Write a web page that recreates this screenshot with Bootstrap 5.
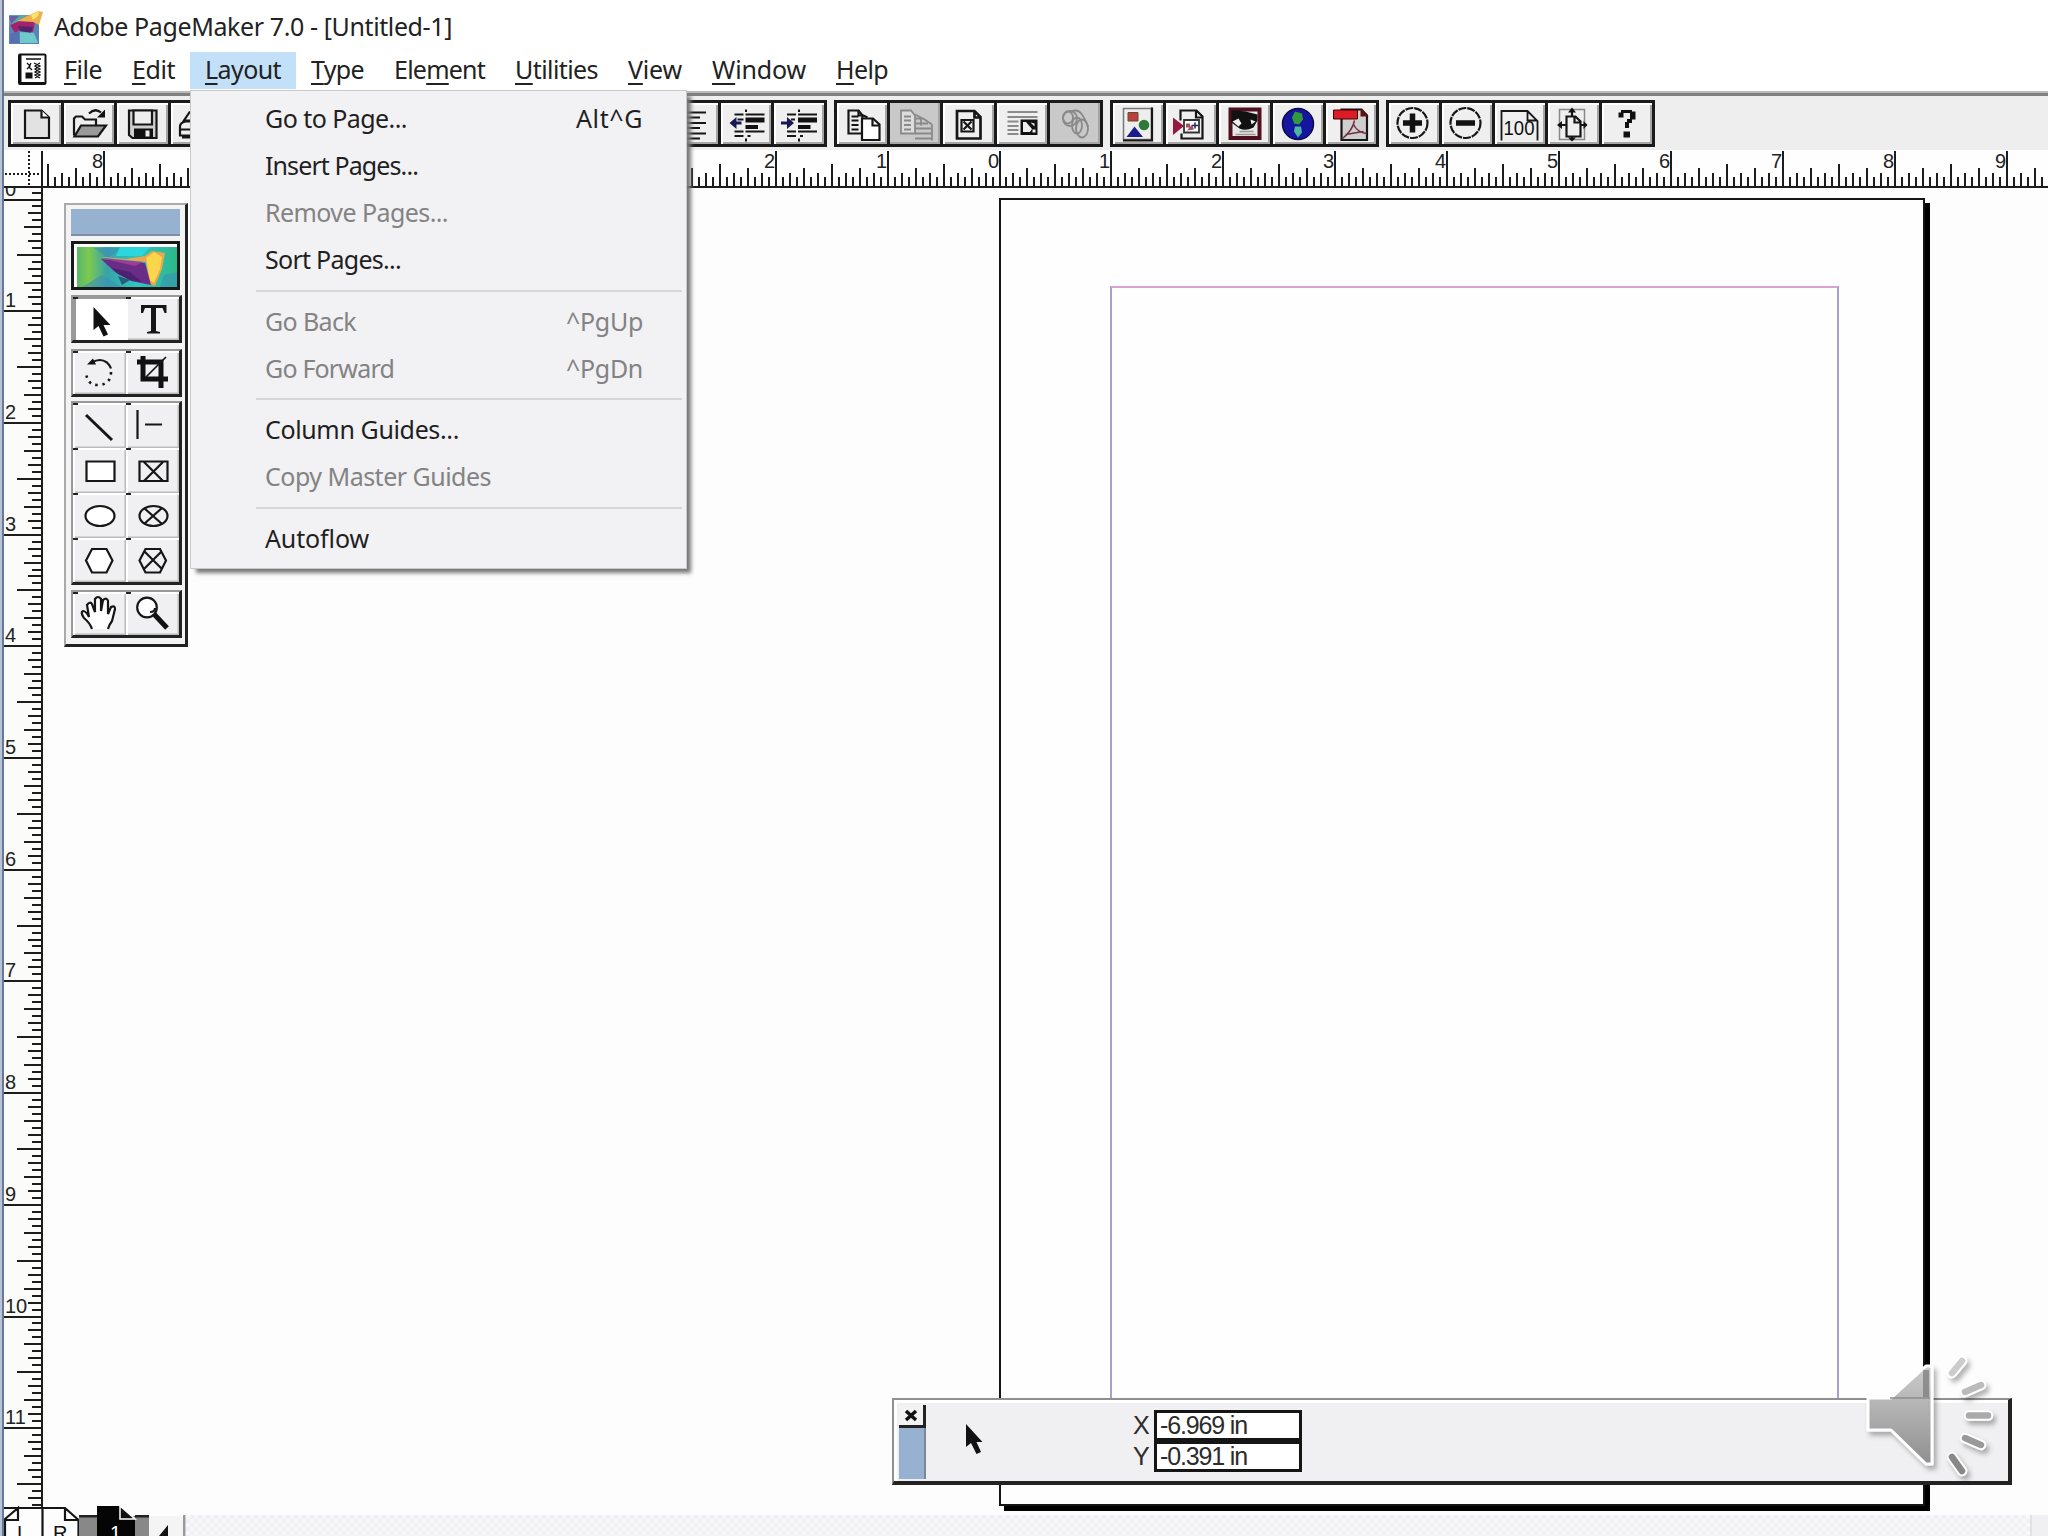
<!DOCTYPE html>
<html lang="en">
<head>
<meta charset="utf-8">
<title>Adobe PageMaker 7.0 - [Untitled-1]</title>
<link href="https://cdn.jsdelivr.net/npm/bootstrap@5.3.0/dist/css/bootstrap.min.css" rel="stylesheet">
<style>
  html, body { width: 2048px; height: 1536px; overflow: hidden; }
  body { font-family: "Noto Sans", "Open Sans", sans-serif; font-size: 25px; color: #222; background: #fdfdfd; line-height: 1; }
  svg { display: block; }
  .app-frame { width: 2048px; height: 1536px; border-left: 2px solid #b9c3d3; }
  .app-inner { border-left: 2px solid #66789c; min-width: 0; }
  .caption-bar { height: 50px; padding-left: 4px; gap: 11px; padding-top: 3px; background: #fff; }
  .menu-strip { height: 41px; padding-left: 13px; background: #fff; }
  .menu-strip .nav-link { height: 37px; padding: 0 15px; color: #222; line-height: 35px; margin-top: 2px; border-radius: 0; position: relative; left: 1px; }
  .menu-strip .nav-link.show { background: #c2e1f8; }
  .menu-strip u { text-underline-offset: 4px; text-decoration-thickness: 2px; text-decoration-skip-ink: none; }
  .tool-strip { height: 59px; background: #efeeef; border-top: 2px solid #bbb; padding: 7px 0 0 4px; position: relative; gap: 7px; }
  .tool-strip::before { content: ""; position: absolute; left: 0; right: 0; top: 0; height: 3px; background: #808080; }
  .left-tools { width: 819px; }
  .tgroup { border: 3px solid #1a1a1a; height: 47px; }
  .tgroup .btn { padding: 0; border: 0; border-radius: 0; width: 50.2px; height: 41px; background: #f0eff0; box-shadow: inset 2px 2px #fff, inset -2px -2px #a5a5a5; overflow: hidden; }
  .tgroup .btn + .btn { border-left: 3px solid #1a1a1a; width: 53.2px; }
  .tgroup .btn.dim { background: #c9c9c9; box-shadow: inset -2px -2px #a5a5a5; }
  .text-tools svg { margin-left: 2px; }
  .h-ruler { height: 38px; background: #fefefe; }
  .v-ruler { width: 39px; background: #fbfcf9; }
  .ruler-num { font-family: "Liberation Sans", sans-serif; font-size: 20px; fill: #222; }
  .workarea { background: #fdfdfd; overflow: hidden; }
  .sheet { left: 956px; top: 10px; width: 926px; height: 1308px; border: 2px solid #151515; background: #fefefe; box-shadow: 5px 5px #000; }
  .guides { left: 109px; top: 86px; width: 729px; height: 1180px; border: 2px solid #a9a0d0; border-top-color: #d8a3cf; }
  .pull-menu { left: 190px; top: 90px; width: 497px; height: 479px; background: #f2f1f3; border: 1.5px solid #c9c9c9; border-radius: 0; box-shadow: 5px 5px 4px -1px #777; padding: 4px 4px 0 65px; z-index: 20; font-size: 25px; }
  .pull-menu .dropdown-item { height: 47px; padding: 0 39px 0 9px; line-height: 46px; color: #1f1f1f; }
  .pull-menu .dropdown-item.disabled { color: #838383; }
  .pull-menu .dropdown-divider { margin: 6.5px 0 6px; border-top: 2px solid #d6d5d7; opacity: 1; }
  .toolbox { left: 64px; top: 203px; width: 124px; height: 444px; background: #f4f3f4; border: 2px solid #aaa; border-right: 3px solid #222; border-bottom: 3px solid #222; padding: 4px 5px 0 5px; z-index: 10; }
  .toolbox .grip { height: 27px; background: #97b2d0; border-bottom: 2px solid #7f8fa5; }
  .toolbox .emblem { width: 109px; height: 49px; margin-top: 5px; border: 3px solid #181818; background: #fff; padding: 3px 0 0 3px; }
  .tset { width: 111px; border: 2px solid #999; border-right: 3px solid #222; border-bottom: 3px solid #222; background: #f0eff1; }
  .tset > div > div { width: 53px; box-shadow: inset 2px 2px #fff, inset -1.5px -1.5px #bbb; overflow: hidden; position: relative; }
  .tset > div > div::before { content: ""; position: absolute; left: 0; top: 0; width: 5px; height: 2px; background: #222; }
  .tset .picked { background: #fff; box-shadow: inset 3px 2px #999; }
  .ctrl-pal { left: 892px; top: 1398px; width: 1120px; height: 87px; background: #f0eff1; border: 2px solid #8f8f8f; border-right: 4px solid #222; border-bottom: 4px solid #222; box-shadow: inset 3px 3px #fff; padding: 5px; z-index: 10; }
  .pal-grip { width: 27px; height: 74px; background: #97b2d0; border-right: 2px solid #7c8896; }
  .pal-x { width: 27px; height: 23px; background: #f2f2f2; border-right: 3px solid #222; border-bottom: 3px solid #222; }
  .coord { font-family: "Liberation Sans", sans-serif; font-size: 25px; color: #2c2c2c; }
  .coord .val { width: 148px; height: 31px; border: 3px solid #151515; background: #fff; padding-left: 3px; line-height: 24px; margin-bottom: -1px; }
  .coord .key { width: 21px; line-height: 31px; }
  .speaker { left: 1855px; top: 1344px; z-index: 30; }
  .page-strip { left: 4px; top: 1506px; height: 30px; z-index: 8; right: 0; }
  .scroll-track { margin-top: 9px; background: repeating-conic-gradient(#f1f0f2 0 25%, #f8f7f9 0 50%) 0 0 / 8px 8px; }
  .scroll-end { margin-top: 9px; width: 18px; background: #f0eff1; border-left: 2px solid #e2e1e3; }
  .ln { fill: none; stroke: #161616; stroke-width: 2.2; }
  .pd { fill: none; stroke: #8a8a8a; stroke-width: 1.8; }
  .fit { white-space: nowrap; display: inline-block; }
</style>
<script src="https://cdn.jsdelivr.net/npm/bootstrap@5.3.0/dist/js/bootstrap.bundle.min.js"></script>
</head>
<body>
<div class="app-frame d-flex position-relative">
 <div class="app-inner d-flex flex-column flex-grow-1">
  <header class="caption-bar d-flex align-items-center">
    <svg width="35" height="34" viewBox="8 8 35 34"><rect x="9" y="13" width="30" height="29" fill="#5b83b5"/><path d="M9 13h24l-9 6-15 6z" fill="#5aa6a0"/><path d="M9 14h10l-8 8z" fill="#6b5da8"/><path d="M10 23l14-6 11 3-2 10-12-3-6 4z" fill="#a3226f"/><path d="M18 24l15 1-2 6-11-2z" fill="#54246b"/><path d="M17 19l21-10 5 1-4 13-6-3z" fill="#eeb04c"/><path d="M31 13l8-4-1 5-5 4z" fill="#fbe26a"/><path d="M20 30l14 1 4 10H19z" fill="#6fc9cb"/><path d="M10 32l9-3 1 12H10z" fill="#5670b0"/></svg>
    <span class="fit" data-w="398">Adobe PageMaker 7.0 - [Untitled-1]</span>
  </header>
  <nav class="menu-strip d-flex">
    <svg width="31" height="33" viewBox="17 53 31 33" style="margin-top:3px"><rect x="18" y="53.500" width="28.500" height="31.500" rx="2" fill="#111"/><path d="M21.500 55.500h23v26.500h-23z" fill="#fff"/><path d="M26 59h15M27 63l3 3-3 3M31 63l-2 4 3 3M34 63l6 3-5 3 5 3-5 3 5 3M40 63l-5 3 5 3-5 3 5 3-5 3" stroke="#111" stroke-width="1.300" fill="none"/><path d="M25.500 72.500h7v6h-7z" fill="#111"/></svg>
    <a class="nav-link"><span class="fit" data-w="38"><u>F</u>ile</span></a>
    <a class="nav-link"><span class="fit" data-w="43"><u>E</u>dit</span></a>
    <a class="nav-link show"><span class="fit" data-w="76"><u>L</u>ayout</span></a>
    <a class="nav-link"><span class="fit" data-w="53"><u>T</u>ype</span></a>
    <a class="nav-link"><span class="fit" data-w="91">Ele<u>m</u>ent</span></a>
    <a class="nav-link"><span class="fit" data-w="83"><u>U</u>tilities</span></a>
    <a class="nav-link"><span class="fit" data-w="54"><u>V</u>iew</span></a>
    <a class="nav-link"><span class="fit" data-w="94"><u>W</u>indow</span></a>
    <a class="nav-link"><span class="fit" data-w="52"><u>H</u>elp</span></a>
  </nav>
  <div class="tool-strip d-flex">
    <div class="left-tools d-flex justify-content-between flex-shrink-0">
      <div class="tgroup d-flex">
        <button class="btn"><svg width="51" height="41" viewBox="10.500 102.500 51 41"><path class="ln" style="fill:#e2e2e2" d="M24.500 110H41l7.500 7v20.500h-24z"/><path class="ln" style="fill:#fff" d="M41 110v7h7.500"/></svg></button>
        <button class="btn"><svg width="51" height="41" viewBox="64 102.500 51 41"><path class="ln" d="M74 135v-17l2-2h6l3 3h11v6M89 113q6-6 12-1"/><path class="ln" style="fill:#999" d="M81 125h25l-8 11H74.500z"/><path d="M97 117h8v-8z" fill="#111"/></svg></button>
        <button class="btn"><svg width="51" height="41" viewBox="117.500 102.500 51 41"><path class="ln" d="M129.500 110h27.500v27.500h-24l-3.500-3z" style="fill:#cfcfcf"/><path class="ln" d="M134 110h18.500v14H134z" style="fill:#eee"/><path d="M134.500 128h19v10h-19z" fill="#111"/><path d="M146 130h4v6h-4z" fill="#eee"/></svg></button>
        <button class="btn"><svg width="51" height="41" viewBox="171 102.500 51 41"><path class="ln" d="M190 111l-6 9h20M180 135v-9q0-4 6-5h20v14zM180 129h28M182 137h20"/></svg></button>
        <button class="btn"></button>
      </div>
      <div class="tgroup text-tools d-flex">
        <button class="btn"></button><button class="btn"></button><button class="btn"></button><button class="btn"></button><button class="btn"></button><button class="btn"></button><button class="btn"></button>
        <button class="btn"><svg width="51" height="41" viewBox="669 102.500 51 41"><path class="ln" d="M681 112h25M681 117h19M681 122.500h25M681 127.500h19M681 133h25M681 138h19"/></svg></button>
        <button class="btn"><svg width="51" height="41" viewBox="722.500 102.500 51 41"><path class="ln" d="M734 114h9M737 119h6M734 131h9M734 135.500h9M745 114h19M745 131h19M747 135.500h3"/><path d="M745 117h19v5h-19zM745 124.500h12.500v4H745zM744.500 109h2v2.500h-2zM744.500 138h2v3h-2z" fill="#111"/><path d="M729 122.500l7-6v4.500h5v3h-5v4.500z" fill="#181850"/></svg></button>
        <button class="btn"><svg width="51" height="41" viewBox="776 102.500 51 41"><path class="ln" d="M787 114h9M791 119h4M787 131h9M787 135.500h9M798 114h19M798 131h19M800 135.500h3"/><path d="M798 117h19v5h-19zM798 124.500h12.500v4H798zM798 109h2v2.500h-2zM798 138h2v3h-2z" fill="#111"/><path d="M794 122.500l-7-6v4.500h-6v3h6v4.500z" fill="#181850"/></svg></button>
      </div>
    </div>
    <div class="tgroup d-flex flex-shrink-0">
      <button class="btn"><svg width="51" height="41" viewBox="836.500 102.500 51 41"><path class="ln" d="M848 110h10l4 5v18h-14zM851 116h7M851 120h7M851 124.500h7M851 129h7"/><path class="ln" style="fill:#fff" d="M861.500 118h11l6.500 6v15.500h-17.500z"/><path class="ln" d="M872 118v7h7M858 110v5h5l4 2"/></svg></button>
      <button class="btn dim"><svg width="51" height="41" viewBox="890 102.500 51 41"><path class="pd" style="fill:#ddd" d="M901 110h10l4 5v18h-14z"/><path class="pd" d="M904 116h7M904 120h7M904 124.500h7M904 129h7M915 118h8l9 6M915 123h13M915 128h17M915 133h17M915 138h17M932 124v16M915 114l6 3v8"/></svg></button>
      <button class="btn"><svg width="51" height="41" viewBox="943.500 102.500 51 41"><path class="ln" style="stroke-width:2.700" d="M957.500 110.500H975l6 6v21.500h-23.500zM975 110v7h6"/><path class="ln" d="M962 119.500h12v11.500h-12zM964 121l8 8M972 121l-8 8"/></svg></button>
      <button class="btn"><svg width="51" height="41" viewBox="996.500 102.500 51 41"><path class="pd" d="M1007 111.500h30M1007 116.500h30M1007 121h11M1007 125.500h11M1007 129.500h11M1007 133.500h11"/><path d="M1020 119h17v15.500h-17z" fill="#111"/><path d="M1022.500 121.500h3l6 7-2 3h-7zM1030 122l4 1v3zM1032 129h3v3h-3z" fill="#eee"/></svg></button>
      <button class="btn dim"><svg width="51" height="41" viewBox="1050 102.500 51 41"><g class="pd"><ellipse cx="1068" cy="117" rx="5" ry="6"/><ellipse cx="1070" cy="118" rx="7" ry="7.500"/><ellipse cx="1077" cy="125" rx="5" ry="8"/><ellipse cx="1082" cy="128" rx="6" ry="9"/><path d="M1071 111q7-3 11 3t6 12"/></g></svg></button>
    </div>
    <div class="tgroup d-flex flex-shrink-0">
      <button class="btn"><svg width="51" height="41" viewBox="1112.500 102.500 51 41"><path fill="#eee" stroke="#777" stroke-width="1.500" d="M1123 108h28v31h-28z"/><path class="ln" d="M1151.500 107v33h-29"/><path fill="#c23d42" stroke="#552" d="M1127.500 112h10v8.500h-10z"/><circle cx="1143.500" cy="124.500" r="5.300" fill="#2f7a3a"/><path fill="#1c1c8e" d="M1126 136.500l8-10.500 8.500 10.500z"/></svg></button>
      <button class="btn"><svg width="51" height="41" viewBox="1166 102.500 51 41"><path class="ln" style="fill:#eee" d="M1180.500 120v-10h16l6 6v22h-21v-5M1196 110v7h7"/><path fill="#fff" stroke="#333" stroke-width="1.800" d="M1184 119.500h15v12.500h-15z"/><path d="M1173 117l11 8.500-11 9z" fill="#94193f"/><path d="M1186 123h4v4h-4zM1187 130l5-6 2 5z" fill="#a2505e"/><path d="M1192 125h6M1195 122v6" stroke="#226" stroke-width="1.500"/></svg></button>
      <button class="btn"><svg width="51" height="41" viewBox="1219.500 102.500 51 41"><path fill="#e9e7e8" stroke="#501020" stroke-width="4" d="M1231 109h29v28.500h-29z"/><path fill="#111" d="M1232 114q6-5 14-3l12 3v6l-4 7q-8 4-14 1l-8-6zM1232 110h9l-9 6z"/><path fill="#eee" d="M1233 121l6-3 3 5-3 3zM1251 119l5 2-4 3z"/><path d="M1240 131h14M1236 134h20" stroke="#999" stroke-width="1.600"/></svg></button>
      <button class="btn"><svg width="51" height="41" viewBox="1273 102.500 51 41"><circle cx="1298" cy="123.500" r="15.500" fill="#1515a0" stroke="#0b0b45" stroke-width="1.500"/><path fill="#319a3c" d="M1295 111l7 2 1 6-4 5-5-1-2-6z"/><path fill="#4cb6a0" d="M1295 126h6l1 6-4 5-4-6z"/></svg></button>
      <button class="btn"><svg width="51" height="41" viewBox="1326.500 102.500 51 41"><path class="ln" style="fill:#cfcfcf" d="M1342 109h20l5.500 6v24.500H1342z"/><path d="M1361 108v8h8z" fill="#611"/><path fill="#dc1b24" stroke="#400" d="M1334 109.500h24v9h-24z"/><path fill="none" stroke="#703040" stroke-width="1.500" d="M1343 138q10-8 12-18M1354 124q4 8 13 9M1346 134l18-3"/></svg></button>
    </div>
    <div class="tgroup d-flex flex-shrink-0">
      <button class="btn"><svg width="51" height="41" viewBox="1388 102.500 51 41"><circle class="ln" cx="1411.500" cy="122.500" r="15" stroke-dasharray="8 1"/><path d="M1411.500 113v19M1402 122.500h19" stroke="#111" stroke-width="5.500"/></svg></button>
      <button class="btn"><svg width="51" height="41" viewBox="1441.500 102.500 51 41"><circle class="ln" cx="1465" cy="122.500" r="15" stroke-dasharray="8 1"/><path d="M1455.500 122.500h19" stroke="#111" stroke-width="5.500"/></svg></button>
      <button class="btn"><svg width="51" height="41" viewBox="1494.500 102.500 51 41"><path class="ln" style="stroke-width:1.800" d="M1501 140v-29.500h26l10 10V140M1527 110v10h10"/><text x="1503" y="134" font-family="Liberation Sans" font-size="20" textLength="31" lengthAdjust="spacingAndGlyphs" fill="#111">100</text></svg></button>
      <button class="btn"><svg width="51" height="41" viewBox="1547.500 102.500 51 41"><path fill="none" stroke="#888" stroke-width="1.500" d="M1559 109h25v30h-25z"/><path class="ln" d="M1566 116h9l5 5v15h-14zM1574 116v6h6M1571.500 110v6M1571.500 136v4M1559 124.500h7M1580 124.500h6"/><path d="M1567.500 112l4-5 4 5zM1567.500 137l4 4 4-4zM1561.500 120.500v8l-5-4zM1583 120.500v8l4-4z" fill="#111"/></svg></button>
      <button class="btn"><svg width="51" height="41" viewBox="1601 102.500 51 41"><path d="M1617.500 112h5v5h-5zM1620 109.500h11v3h-11zM1629 111h5.500v8H1629zM1626 118.500h5v4h-5zM1624 121.500h4v6h-4z" fill="#111"/><path d="M1622.500 131h6.500v6h-6.500z" fill="#111"/></svg></button>
    </div>
  </div>
  <div class="h-ruler"><svg id="hr" width="2044" height="38" viewBox="4 150 2044 38" shape-rendering="crispEdges"></svg></div>
  <div class="d-flex flex-grow-1" style="min-height:0">
    <div class="v-ruler flex-shrink-0"><svg id="vr" width="39" height="1348" viewBox="4 188 39 1348" shape-rendering="crispEdges"></svg></div>
    <main class="workarea flex-grow-1 position-relative">
      <div class="sheet position-absolute"><div class="guides position-absolute"></div></div>
    </main>
  </div>
 </div>

 <div class="pull-menu dropdown-menu show position-absolute" style="margin-left:-2px">
   <a class="dropdown-item d-flex justify-content-between"><span class="fit" data-w="142">Go to Page...</span><span class="fit" data-w="67">Alt^G</span></a>
   <a class="dropdown-item"><span class="fit" data-w="153">Insert Pages...</span></a>
   <a class="dropdown-item disabled"><span class="fit" data-w="183">Remove Pages...</span></a>
   <a class="dropdown-item"><span class="fit" data-w="136">Sort Pages...</span></a>
   <div class="dropdown-divider"></div>
   <a class="dropdown-item disabled d-flex justify-content-between"><span class="fit" data-w="91">Go Back</span><span class="fit" data-w="77">^PgUp</span></a>
   <a class="dropdown-item disabled d-flex justify-content-between"><span class="fit" data-w="129">Go Forward</span><span class="fit" data-w="77">^PgDn</span></a>
   <div class="dropdown-divider"></div>
   <a class="dropdown-item"><span class="fit" data-w="194">Column Guides...</span></a>
   <a class="dropdown-item disabled"><span class="fit" data-w="226">Copy Master Guides</span></a>
   <div class="dropdown-divider"></div>
   <a class="dropdown-item"><span class="fit" data-w="104">Autoflow</span></a>
 </div>

 <aside class="toolbox position-absolute" style="margin-left:-2px">
   <div class="grip"></div>
   <div class="emblem"><svg width="100" height="40" viewBox="77 247 100 40"><defs><linearGradient id="sea"><stop offset="0" stop-color="#58b76a"/><stop offset=".12" stop-color="#7cc94f"/><stop offset=".3" stop-color="#38a3a6"/><stop offset=".6" stop-color="#2cc5c6"/><stop offset="1" stop-color="#2eb887"/></linearGradient></defs><path fill="url(#sea)" d="M77 247h100v40H77z"/><path fill="#3a8fb8" opacity=".6" d="M94 248h28l-14 10zM82 287l20-12 20 12zM160 287l4-12 13-3v15z"/><path fill="#2bd6dc" d="M120 247h30l-8 9h-26z"/><path fill="#2a5d78" d="M118 276l12 4-8 5z"/><path fill="#e9a84a" d="M102 257l24 2 19-3 7-5 13 2-3 16-7 17-5-2-4-22-40-4z"/><path fill="#fbd64c" d="M146 258l8-6 8 5-2 12-6 14-4-3z"/><path fill="#6b2c88" d="M101 259l20 2 24 2 6 22-20-4-16-9z"/><path fill="#4a2270" d="M112 268l18 4 12 10-12-2-12-6z"/><path fill="#9a3f95" d="M101 258l42 4-8 4z"/></svg></div>
   <div class="tset" style="margin-top:5px;height:48px"><div class="d-flex h-100">
     <div class="picked"><svg width="53" height="43" viewBox="73 297 53 43"><path d="M93.500 307v23l5-4 5 10.500 4.500-2-4.500-9.500h7z" fill="#111"/></svg></div>
     <div><svg width="53" height="43" viewBox="126 297 53 43"><path fill="#161616" d="M141 305h25.500v8h-2l-2-5H156v23l4 1v1.500h-13V332l4-1v-23h-6l-2 5h-2z"/></svg></div></div></div>
   <div class="tset" style="margin-top:6px;height:48px"><div class="d-flex h-100">
     <div><svg width="53" height="43" viewBox="73 351 53 43"><path d="M92 362.500q8-5 15 0 3 3 4 6" class="ln"/><path d="M111 372q0 12-12 13t-13-13" class="ln" stroke-dasharray="2.500 4.500" style="stroke-width:2.600"/><path d="M87 364.500l6-6 3 6z" fill="#111"/></svg></div>
     <div><svg width="53" height="43" viewBox="126 351 53 43"><path d="M143 356v23h25M137 362h24v26" stroke="#111" stroke-width="5" fill="none"/><path d="M146 377l20-20" class="ln" style="stroke-width:1.700"/></svg></div></div></div>
   <div class="tset" style="margin-top:4px;height:184px">
     <div class="d-flex" style="height:45px"><div><svg width="53" height="45" viewBox="73 402 53 45"><path class="ln" style="stroke-width:3" d="M86 414l26 25"/></svg></div><div><svg width="53" height="45" viewBox="126 402 53 45"><path class="ln" d="M137.500 409v29M145 423.500h17"/></svg></div></div>
     <div class="d-flex" style="height:45px"><div><svg width="53" height="45" viewBox="73 448 53 45"><path class="ln" style="fill:#fff" d="M86.500 461.500h28V481h-28z"/></svg></div><div><svg width="53" height="45" viewBox="126 448 53 45"><path class="ln" d="M139.500 461.500h28V481h-28zM144 462l19 19M163 462l-19 19"/></svg></div></div>
     <div class="d-flex" style="height:45px"><div><svg width="53" height="45" viewBox="73 493 53 45"><ellipse class="ln" cx="100" cy="516" rx="14.500" ry="10" style="fill:#fff"/></svg></div><div><svg width="53" height="45" viewBox="126 493 53 45"><ellipse class="ln" cx="153.500" cy="516" rx="14" ry="10"/><path class="ln" d="M144 508l18 16M162 508l-18 16"/></svg></div></div>
     <div class="d-flex" style="height:44px"><div><svg width="53" height="44" viewBox="73 538 53 44"><path class="ln" style="fill:#fff" d="M92 549h14.500l6 11.500-6 12H92l-6-12z"/></svg></div><div><svg width="53" height="44" viewBox="126 538 53 44"><path class="ln" d="M145.500 549H160l6 11.500-6 12h-14.500l-6-12zM144 551l18 18M162 551l-18 18"/></svg></div></div>
   </div>
   <div class="tset" style="margin-top:5px;height:48px"><div class="d-flex h-100">
     <div><svg width="53" height="43" viewBox="73 592 53 43"><path class="ln" style="fill:#fff" d="M92 629q-2-6-8-11-4-6-1-7 3 0 6 6l-2-12q3-4 5-1l3 8v-13q3-4 6 0v12l2-11q4-3 5 1v13l3-7q4-2 4 2l-3 12q-3 4-4 8"/></svg></div>
     <div><svg width="53" height="43" viewBox="126 592 53 43"><circle class="ln" cx="147" cy="607.500" r="9.800" style="fill:#fff"/><path class="ln" d="M150 612q5 0 5-4"/><path d="M154 614l13 14" stroke="#111" stroke-width="5"/></svg></div></div></div>
 </aside>

 <section class="ctrl-pal position-absolute d-flex" style="margin-left:-2px">
   <div class="pal-grip flex-shrink-0"><div class="pal-x"><svg width="24" height="20" viewBox="0 0 24 20"><path d="M7 6l10 9M17 6L7 15" stroke="#111" stroke-width="3.500"/></svg></div></div>
   <svg class="flex-shrink-0" width="60" height="74" viewBox="926 1406 60 74"><path d="M966 1425v23l5-4 5.500 11 4.500-2-4.500-10h6z" fill="#111"/></svg>
   <div class="coord" style="margin-left:147px;margin-top:5px">
     <div class="d-flex"><span class="key"><span class="fit" data-w="17">X</span></span><div class="val"><span class="fit" data-w="87">-6.969 in</span></div></div>
     <div class="d-flex"><span class="key"><span class="fit" data-w="17">Y</span></span><div class="val"><span class="fit" data-w="87">-0.391 in</span></div></div>
   </div>
 </section>

 <footer class="page-strip position-absolute d-flex" style="margin-left:-2px">
   <svg class="flex-shrink-0" width="182" height="30" viewBox="4 1506 182 30">
     <path d="M4 1508h75v28H4z" fill="#fdfdfd"/><path class="ln" d="M4 1508h61l13.500 12v16M42.500 1507v29M5 1536v-17l13-11v12H6M65 1508v12h13"/>
     <path d="M79 1516h70v20H79z" fill="#888"/><path d="M79 1515h18v2.500H79zM135 1515h14v2.500h-14z" fill="#222"/><path d="M97 1506h23l15 13v17H97z" fill="#050505"/><path d="M120 1506v13h15z" fill="#111" stroke="#fff" stroke-width="1.500"/>
     <path d="M149 1516h36v20h-36z" fill="#f4f4f4"/><path d="M183 1515h2.500v21H183z" fill="#999"/><path d="M168 1525v22l-9-11z" fill="#111"/>
     <g font-family="Liberation Sans" font-size="20"><text x="17" y="1540" fill="#111">L</text><text x="53" y="1540" fill="#111">R</text><text x="110" y="1540" fill="#fff">1</text></g>
   </svg>
   <div class="scroll-track flex-grow-1"></div><div class="scroll-end"></div>
 </footer>

 <svg class="speaker position-absolute" style="margin-left:-2px" width="150" height="140" viewBox="1855 1345 150 140">
   <defs><linearGradient id="cone" x1="0" y1="0" x2="0" y2="1"><stop offset="0" stop-color="#ccc"/><stop offset="1" stop-color="#8f8f8f"/></linearGradient>
   <filter id="soft" x="-20%" y="-20%" width="150%" height="150%"><feDropShadow dx="3" dy="4" stdDeviation="2.500" flood-color="#000" flood-opacity=".3"/></filter></defs>
   <g filter="url(#soft)"><path d="M1868 1399h23l35-32h6v98h-6l-35-34h-23z" fill="url(#cone)" stroke="#fff" stroke-width="3" stroke-linejoin="round"/></g>
   <path d="M1923 1371h6v27h-6z" fill="#777" opacity=".7"/><path d="M1890 1399h40" stroke="#8d8d8d" stroke-width="1.500"/>
   <g filter="url(#soft)" stroke="#fff" stroke-width="10.500" stroke-linecap="round"><path d="M1952 1374l10-12M1965 1393l16-7M1969 1416.500h19M1965 1439l16 7M1952 1458l10 14"/></g>
   <g stroke-width="6.500" stroke-linecap="round"><path stroke="#ccc" d="M1952 1374l10-12"/><path stroke="#bbb" d="M1965 1393l16-7"/><path stroke="#aaa" d="M1969 1416.500h19"/><path stroke="#999" d="M1965 1439l16 7"/><path stroke="#888" d="M1952 1458l10 14"/></g>
 </svg>
</div>
<script>
  // Rulers: sixteenths of an inch, about 112 px to the inch.
  const h = [], v = [], rect = (x, y, w, t) => `<rect x="${x}" y="${y}" width="${w}" height="${t}" fill="#1c1c1c"/>`;
  const rank = i => i % 16 === 0 ? 0 : i % 8 === 0 ? 1 : i % 4 === 0 ? 2 : i % 2 === 0 ? 3 : 4;
  const hTop = [151, 164, 168, 173, 177], vLeft = [4, 17, 24, 28, 32];
  for (let i = -136; i <= 150; i++) {
    const x = Math.round(998.5 + i * 111.9 / 16), r = rank(i);
    if (x > 44) h.push(rect(x, hTop[r], 2, 187 - hTop[r]));
    // numbers under the open menu are left out
    if (r === 0 && (x < 190 || x > 690)) h.push(`<text class="ruler-num" x="${x}" y="168" text-anchor="end">${Math.abs(i / 16)}</text>`);
  }
  h.push(rect(4, 186, 2044, 2), rect(41, 151, 2, 37));
  for (let k = 0; k < 9; k++) h.push(rect(28, 151 + k * 4, 2, 2), rect(5 + k * 4, 173, 2, 2));
  hr.innerHTML = h.join('');
  for (let i = -1; i <= 187; i++) {
    const y = Math.round(198.5 + i * 111.7 / 16), r = rank(i);
    v.push(rect(vLeft[r], y, 42 - vLeft[r], 2));
    if (r === 0) v.push(`<text class="ruler-num" x="5" y="${y - 3}">${i / 16}</text>`);
  }
  v.push(rect(41, 188, 2, 1348));
  vr.innerHTML = v.join('');
  // Track each label to its set width.
  document.querySelectorAll('.fit').forEach(e => {
    const n = e.textContent.length;
    e.style.letterSpacing = ((+e.dataset.w - e.getBoundingClientRect().width) / n).toFixed(3) + 'px';
  });
</script>
</body>
</html>
